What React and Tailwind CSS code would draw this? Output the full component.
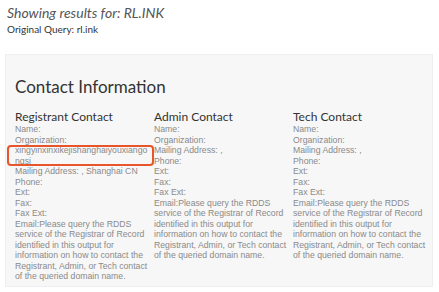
import React from "react";

const emailText =
  "Email:Please query the RDDS service of the Registrar of Record identified in this output for information on how to contact the Registrant, Admin, or Tech contact of the queried domain name.";

const contacts = [
  {
    title: "Registrant Contact",
    org: ["xingyinxinxikejishanghaiyouxiango", "ngsi"],
    address: "Mailing Address: , Shanghai CN",
  },
  { title: "Admin Contact", org: null, address: "Mailing Address: ," },
  { title: "Tech Contact", org: null, address: "Mailing Address: ," },
];

const ContactColumn = ({ contact }) => (
  <div className="w-[139px] pr-[3px]">
    <h3 className="font-['Lato'] text-[12px] leading-[14px] text-[#333]">
      {contact.title}
    </h3>
    <div className="font-['Liberation_Sans',Arial,sans-serif] text-[8.7px] leading-[10.5px] text-[#8a8a8a]">
      <div>Name:</div>
      <div>Organization:</div>
      {contact.org && (
        <div className="relative">
          {contact.org.map((part) => (
            <div key={part}>{part}</div>
          ))}
          {/* red highlight box */}
          <div className="absolute -left-[8px] -right-[3px] top-[0px] bottom-[0px] rounded-[4px] border-2 border-[#e8552b]" />
        </div>
      )}
      <div>{contact.address}</div>
      <div>Phone:</div>
      <div>Ext:</div>
      <div>Fax:</div>
      <div>Fax Ext:</div>
      <div>{emailText}</div>
    </div>
  </div>
);

const App = () => {
  return (
    <div className="w-[439px] h-[292px] bg-white overflow-hidden">
      <div className="px-[7px] pt-[4px]">
        <h2 className="font-['Lato'] italic text-[14px] leading-[17px] text-[#555]">
          Showing results for: RL.INK
        </h2>
        <p className="mt-[2px] font-['Lato'] text-[10px] leading-[12px] text-[#333]">
          Original Query: rl.ink
        </p>
      </div>
      <div className="ml-[5px] mt-[19px] w-[428px] h-[233px] bg-[#f7f7f7] border border-[#efefef] pl-[9px] pt-[22px]">
        <h1 className="font-['Lato'] text-[17px] leading-[20px] text-[#333]">
          Contact Information
        </h1>
        <div className="flex mt-[13px]">
          {contacts.map((c) => (
            <ContactColumn key={c.title} contact={c} />
          ))}
        </div>
      </div>
    </div>
  );
};

export default App;
